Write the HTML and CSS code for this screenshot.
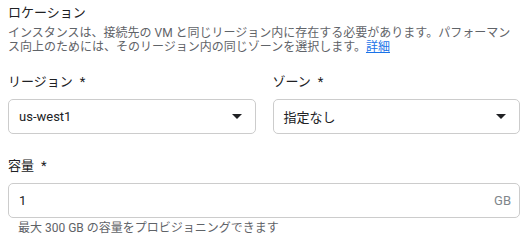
FILE: index.html
```html
<!DOCTYPE html>
<html lang="ja">
<head>
<meta charset="utf-8">
<link rel="stylesheet" href="styles.css">
</head>
<body>
<div class="page">
  <div class="title">ロケーション</div>
  <div class="desc">インスタンスは、接続先の VM と同じリージョン内に存在する必要があります。パフォーマンス向上のためには、そのリージョン内の同じゾーンを選択します。<a class="link" href="#">詳細</a></div>
  <div class="row">
    <div class="field">
      <div class="label">リージョン<span class="req">*</span></div>
      <div class="box select"><span class="value">us-west1</span><span class="arrow"></span></div>
    </div>
    <div class="field">
      <div class="label">ゾーン<span class="req">*</span></div>
      <div class="box select"><span class="value">指定なし</span><span class="arrow"></span></div>
    </div>
  </div>
  <div class="field cap">
    <div class="label">容量<span class="req">*</span></div>
    <div class="box input"><span class="value">1</span><span class="suffix">GB</span></div>
    <div class="hint">最大 300 GB の容量をプロビジョニングできます</div>
  </div>
</div>
</body>
</html>
```

FILE: styles.css
```css
html, body {
  margin: 0;
  padding: 0;
  background: #ffffff;
}
body {
  font-family: Roboto, "Noto Sans CJK JP", sans-serif;
  color: #202124;
}
.page {
  padding: 4px 10px 0 8px;
  width: 512px;
}
.title {
  font-size: 13px;
  line-height: 18px;
  color: #202124;
}
.desc {
  margin-top: 4px;
  font-size: 12px;
  line-height: 14px;
  color: #5f6368;
}
.link {
  color: #1a73e8;
  text-decoration: underline;
}
.row {
  display: flex;
  gap: 17px;
  margin-top: 19px;
}
.row .field {
  flex: 1;
}
.label {
  font-size: 13px;
  line-height: 18px;
  margin-bottom: 8px;
  color: #202124;
}
.req {
  margin-left: 7px;
}
.box {
  box-sizing: border-box;
  height: 35px;
  border: 1px solid #cccccc;
  border-radius: 5px;
  display: flex;
  align-items: center;
  padding: 0 13px 0 10px;
}
.value {
  flex: 1;
  font-size: 13px;
  color: #202124;
}
.arrow {
  width: 0;
  height: 0;
  border-left: 5px solid transparent;
  border-right: 5px solid transparent;
  border-top: 5px solid #202124;
}
.cap {
  margin-top: 23px;
}
.input {
  padding-right: 8px;
}
.suffix {
  font-size: 13px;
  color: #80868b;
}
.hint {
  margin-top: 3px;
  padding-left: 10px;
  font-size: 12px;
  line-height: 14px;
  color: #5f6368;
}
```
